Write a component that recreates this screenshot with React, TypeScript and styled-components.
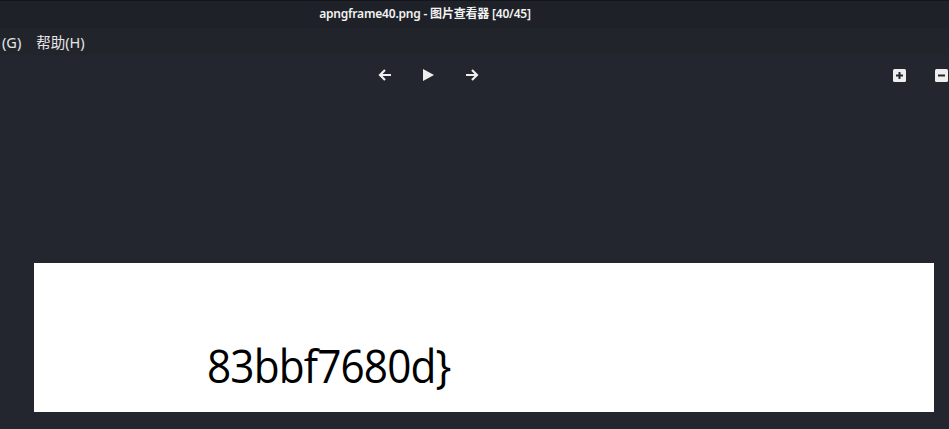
import React from 'react';
import styled, { createGlobalStyle } from 'styled-components';

const GlobalStyle = createGlobalStyle`
  html, body {
    margin: 0;
    padding: 0;
    background: #23262e;
    overflow: hidden;
  }
  body {
    font-family: "Noto Sans", "Noto Sans CJK SC", sans-serif;
  }
`;

const Window = styled.div`
  width: 949px;
  height: 429px;
  display: flex;
  flex-direction: column;
  background: #23262e;
  overflow: hidden;
`;

const TitleBar = styled.div`
  height: 27px;
  border-top: 1px solid #14161b;
  background: #1f2128;
  display: flex;
  align-items: center;
  justify-content: center;
`;

const Title = styled.span`
  color: #f2f2f2;
  font-size: 12px;
  font-weight: 600;
  letter-spacing: -0.2px;
  margin-left: -99px;
  margin-top: -3px;
`;

const MenuBar = styled.div`
  height: 27px;
  background: #22242c;
  display: flex;
  align-items: center;
  gap: 15px;
  padding-left: 2px;
  overflow: hidden;
`;

const MenuItem = styled.span`
  color: #e6e6e6;
  font-size: 14.5px;
  white-space: nowrap;
`;

const Toolbar = styled.div`
  height: 40px;
  position: relative;
  display: flex;
  align-items: center;
  justify-content: center;
  gap: 26px;
  padding-right: 93px;
`;

const ZoomGroup = styled.div`
  position: absolute;
  right: -1px;
  top: 12px;
  display: flex;
  gap: 25px;
`;

const IconButton = styled.button`
  width: 17px;
  height: 17px;
  padding: 0;
  border: none;
  background: transparent;
  display: flex;
  align-items: center;
  justify-content: center;
  cursor: pointer;
`;

const Canvas = styled.div`
  flex: 1;
  padding: 168px 15px 0 34px;
`;

const ImageFrame = styled.div`
  width: 900px;
  height: 149px;
  background: #ffffff;
  display: flex;
  align-items: flex-end;
  padding-left: 173px;
  box-sizing: border-box;
`;

// the source glyphs are narrower than Open Sans, so squeeze horizontally
const FrameText = styled.span`
  display: inline-block;
  font-family: "Open Sans", "Noto Sans", sans-serif;
  font-size: 45px;
  color: #000;
  letter-spacing: -0.9px;
  line-height: 1;
  margin-bottom: 24px;
  transform: scaleX(0.94);
  transform-origin: left bottom;
`;

const ArrowLeft = () => (
  <svg width="15" height="14" viewBox="0 0 15 14">
    <path d="M13 7H2M7 2L2 7l5 5" stroke="#eeeeee" strokeWidth="2.2" fill="none" />
  </svg>
);

const ArrowRight = () => (
  <svg width="15" height="14" viewBox="0 0 15 14">
    <path d="M2 7h11M8 2l5 5-5 5" stroke="#eeeeee" strokeWidth="2.2" fill="none" />
  </svg>
);

const Play = () => (
  <svg width="14" height="14" viewBox="0 0 14 14">
    <path d="M2 1l11 6-11 6z" fill="#eeeeee" />
  </svg>
);

const ZoomBox = ({ minus }: { minus?: boolean }) => (
  <svg width="13" height="13" viewBox="0 0 13 13">
    <rect x="0" y="0" width="13" height="13" rx="1.5" fill="#eeeeee" />
    <path d="M3 6.5h7" stroke="#23262e" strokeWidth="2" />
    {!minus && <path d="M6.5 3v7" stroke="#23262e" strokeWidth="2" />}
  </svg>
);

const frameText = '83bbf7680d}';

export default function App() {
  return (
    <>
      <GlobalStyle />
      <Window>
        <TitleBar>
          <Title>apngframe40.png - 图片查看器 [40/45]</Title>
        </TitleBar>
        <MenuBar>
          <MenuItem>(G)</MenuItem>
          <MenuItem>帮助(H)</MenuItem>
        </MenuBar>
        <Toolbar>
          <IconButton><ArrowLeft /></IconButton>
          <IconButton><Play /></IconButton>
          <IconButton><ArrowRight /></IconButton>
          <ZoomGroup>
            <IconButton><ZoomBox /></IconButton>
            <IconButton><ZoomBox minus /></IconButton>
          </ZoomGroup>
        </Toolbar>
        <Canvas>
          <ImageFrame>
            <FrameText>{frameText}</FrameText>
          </ImageFrame>
        </Canvas>
      </Window>
    </>
  );
}
